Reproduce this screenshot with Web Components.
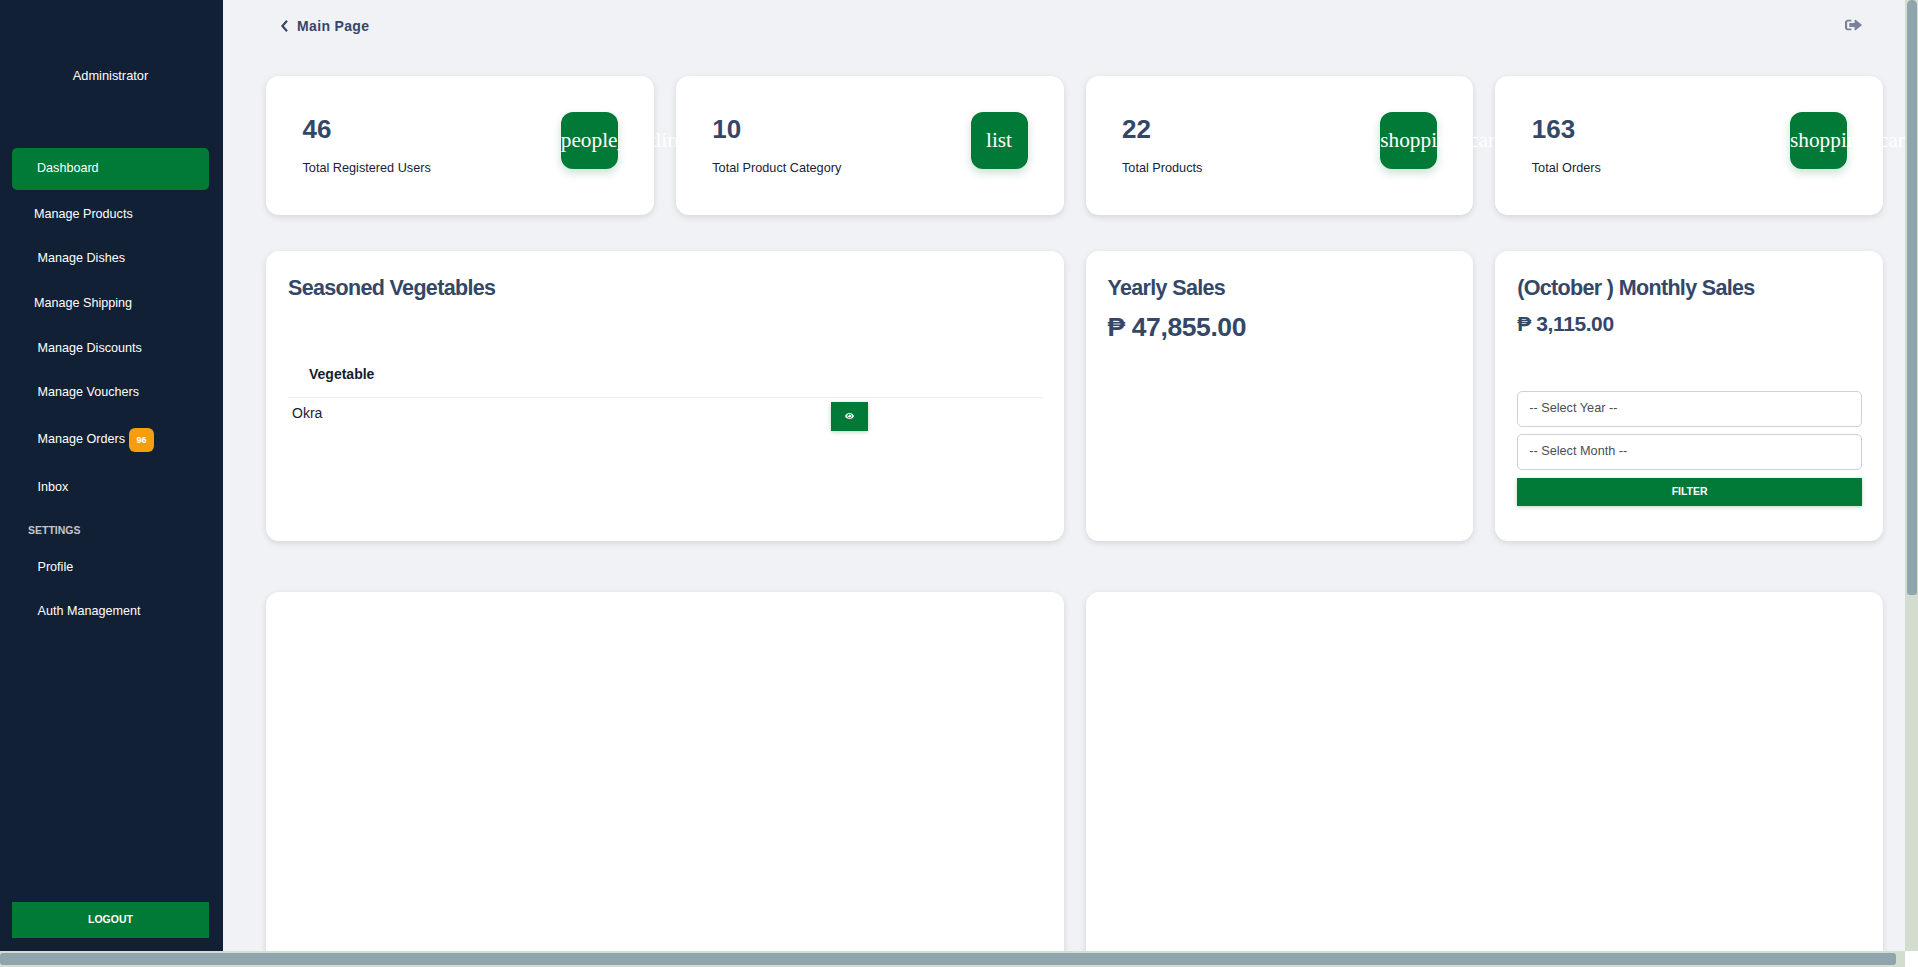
<!DOCTYPE html>
<html lang="en">
<head>
<meta charset="utf-8">
<title>Dashboard</title>
<style>
html,body{margin:0;padding:0;height:100%;overflow:hidden;background:#fff;font-family:"Liberation Sans",Arial,sans-serif}
</style>
</head>
<body>
<app-shell>
  <side-bar slot="side">
    <nav-item active indent="25">Dashboard</nav-item>
    <nav-item indent="22">Manage Products</nav-item>
    <nav-item indent="25.500">Manage Dishes</nav-item>
    <nav-item indent="22">Manage Shipping</nav-item>
    <nav-item indent="25.500">Manage Discounts</nav-item>
    <nav-item indent="25.500">Manage Vouchers</nav-item>
    <nav-item indent="25.500" badge="96" tall>Manage Orders</nav-item>
    <nav-item indent="25.500">Inbox</nav-item>
    <nav-heading>SETTINGS</nav-heading>
    <nav-item indent="25.500">Profile</nav-item>
    <nav-item indent="25.500">Auth Management</nav-item>
  </side-bar>
  <main-view slot="main">
    <top-bar slot="top"></top-bar>
    <stat-card slot="stats" value="46" label="Total Registered Users" icon="people_outline"></stat-card>
    <stat-card slot="stats" value="10" label="Total Product Category" icon="list"></stat-card>
    <stat-card slot="stats" value="22" label="Total Products" icon="shopping_cart"></stat-card>
    <stat-card slot="stats" value="163" label="Total Orders" icon="shopping_cart"></stat-card>
    <panel-card slot="panels" class="wide" heading="Seasoned Vegetables"><veg-table></veg-table></panel-card>
    <panel-card slot="panels" heading="Yearly Sales" amount="₱ 47,855.00" big></panel-card>
    <panel-card slot="panels" heading="(October ) Monthly Sales" amount="₱ 3,115.00"><sales-filter></sales-filter></panel-card>
    <panel-card slot="charts" class="half"></panel-card>
    <panel-card slot="charts" class="half"></panel-card>
  </main-view>
</app-shell>
<script>
const GREEN='#017a38';
function esc(s){return String(s==null?'':s).replace(/&/g,'&amp;').replace(/</g,'&lt;')}
class Base extends HTMLElement{
  connectedCallback(){ if(!this.shadowRoot){ this.attachShadow({mode:'open'}).innerHTML=this.render(); } }
}
customElements.define('app-shell',class extends Base{render(){return `<style>
:host{display:grid;grid-template-columns:1905px 13px;grid-template-rows:951px 16px;width:1918px;height:967px;overflow:hidden}
.body{display:flex;overflow:hidden;min-width:0;min-height:0;background:#f0f2f6}
.v{background:#d2ddd0;padding-left:2px;padding-right:1px}
.v i{display:block;height:595px;background:#90a4ae;border-radius:0 0 3px 3px;border-top-left-radius:5px;border-top-right-radius:5px}
.h{background:#d2ddd0;padding:2px 0}
.h i{display:block;height:12px;width:1896px;background:#90a4ae;border-radius:3px}
.c{background:#fff}
</style>
<div class="body"><slot name="side"></slot><slot name="main"></slot></div>
<div class="v"><i></i></div><div class="h"><i></i></div><div class="c"></div>`}});

customElements.define('side-bar',class extends Base{render(){return `<style>
:host{display:flex;flex-direction:column;flex:0 0 223px;width:223px;height:951px;box-sizing:border-box;background:#112035;color:#fff;padding:0 14px 13px 12px}
.who{height:148px;box-sizing:border-box;padding-top:68px;text-align:center;line-height:16px;font-size:12.8px}
nav{display:flex;flex-direction:column}
button{margin-top:auto;height:36px;border:0;background:${GREEN};color:#fff;font:bold 10.5px "Liberation Sans",Arial,sans-serif;padding:0 0 2px;display:block;width:197px}
</style>
<div class="who">Administrator</div>
<nav><slot></slot></nav>
<button type="button">LOGOUT</button>`}});

customElements.define('nav-item',class extends Base{render(){
  const act=this.hasAttribute('active'), tall=this.hasAttribute('tall'), b=this.getAttribute('badge');
  return `<style>
:host{display:block;width:197px;margin-bottom:2.7px}
a{display:flex;align-items:center;height:${tall?'47':'42'}px;box-sizing:border-box;padding-left:${parseFloat(this.getAttribute('indent')||26)}px;color:#fff;font-size:12.6px;border-radius:5px;background:${act?GREEN:'transparent'}}
span{padding-bottom:${act||tall?'2px':'0'}}
b{display:inline-flex;align-items:center;justify-content:center;width:25px;height:24px;margin:1px 0 0 4px;background:#f59e0b;border-radius:6px;font-size:9px;font-weight:bold;color:#fff}
</style><a><span><slot></slot></span>${b?`<b>${esc(b)}</b>`:''}</a>`}});

customElements.define('nav-heading',class extends Base{render(){return `<style>
:host{display:block;font-size:10.5px;font-weight:bold;color:#c3c7ce;line-height:14px;padding:12px 0 9px 16px}
</style><slot></slot>`}});

customElements.define('main-view',class extends Base{render(){return `<style>
:host{display:block;flex:1 1 auto;min-width:0;height:951px;overflow:hidden;box-sizing:border-box;padding:0 22px 0 43px;color:#1a2238}
.row{display:grid;grid-template-columns:repeat(4,minmax(0,1fr));column-gap:22px}
.stats{height:139px;margin-bottom:36px}
.panels{height:290px;margin-bottom:51px}
.charts{height:420px}
</style>
<slot name="top"></slot>
<div class="row stats"><slot name="stats"></slot></div>
<div class="row panels"><slot name="panels"></slot></div>
<div class="row charts"><slot name="charts"></slot></div>`}});

customElements.define('top-bar',class extends Base{render(){return `<style>
:host{display:flex;justify-content:space-between;height:76px;box-sizing:border-box;padding:17px 21px 0 15px;align-items:flex-start}
.back{display:flex;align-items:center;gap:9px;font-size:14px;font-weight:bold;letter-spacing:.35px;color:#344767;line-height:18px}
.out{margin-top:1px}
svg{display:block}
</style>
<div class="back"><svg width="7" height="12" viewBox="0 0 7 12"><path d="M6 .8L1.4 6 6 11.200" fill="none" stroke="#344767" stroke-width="2.200"/></svg><span>Main Page</span></div>
<svg class="out" width="17" height="14" viewBox="0 0 512 512" preserveAspectRatio="none" fill="#7b809a"><path d="M497 273L329 441c-15 15-41 4.5-41-17v-96H152c-13.3 0-24-10.7-24-24v-96c0-13.3 10.7-24 24-24h136V88c0-21.400 25.900-32 41-17l168 168c9.300 9.400 9.300 24.600 0 34zM192 436v-40c0-6.600-5.400-12-12-12H96c-17.700 0-32-14.300-32-32V160c0-17.700 14.300-32 32-32h84c6.600 0 12-5.400 12-12V76c0-6.600-5.400-12-12-12H96c-53 0-96 43-96 96v192c0 53 43 96 96 96h84c6.600 0 12-5.400 12-12z"/></svg>`}});

customElements.define('stat-card',class extends Base{render(){return `<style>
:host{display:flex;justify-content:space-between;box-sizing:border-box;height:139px;background:#fff;border-radius:13px;box-shadow:0 2px 6px rgba(0,0,0,.12);padding:36px 36px 0 36.500px}
.v{font-size:26px;font-weight:bold;color:#344767;line-height:30px;margin-top:2px}
.l{font-size:12.7px;color:#1a2238;line-height:16px;margin-top:16px}
.i{flex:0 0 57px;width:57px;height:57px;box-sizing:border-box;background:${GREEN};border-radius:12px;box-shadow:0 4px 10px rgba(1,122,56,.22);color:#fff;font:21.3px/57px "Liberation Serif","Times New Roman",serif;white-space:nowrap;text-align:center}
</style>
<div><div class="v">${esc(this.getAttribute('value'))}</div><div class="l">${esc(this.getAttribute('label'))}</div></div>
<div class="i">${esc(this.getAttribute('icon'))}</div>`}});

customElements.define('panel-card',class extends Base{render(){
  const h=this.getAttribute('heading'), a=this.getAttribute('amount'), big=this.hasAttribute('big');
  const cls=this.className;
  return `<style>
:host{display:block;box-sizing:border-box;background:#fff;border-radius:13px;box-shadow:0 2px 6px rgba(0,0,0,.12);padding:23px 21px 0 22px;min-width:0;${(cls==='wide'||cls==='half')?'grid-column:span 2;':''}}
h2{margin:0;font-size:21.5px;font-weight:bold;letter-spacing:-.66px;line-height:28px;color:#344767}
p{margin:${big?'10px':'9px'} 0 0;font-size:${big?'26.5px':'21px'};font-weight:bold;letter-spacing:-.4px;line-height:${big?'30px':'26px'};color:#344767}
</style>${h?`<h2>${esc(h)}</h2>`:''}${a?`<p>${esc(a)}</p>`:''}<slot></slot>`}});

customElements.define('veg-table',class extends Base{render(){return `<style>
:host{display:block;margin-top:49px}
table{border-collapse:collapse;width:100%;table-layout:fixed;font-size:14px;color:#1a2238}
th{height:46px;box-sizing:border-box;padding:0 0 0 21px;text-align:left;font-weight:bold;font-size:14px;border-bottom:1px solid #eee;color:#151c30}
td{vertical-align:top;padding:7px 0 0 4px;line-height:16px}
td.b{padding:4px 0 0}
button{display:flex;align-items:center;justify-content:center;width:37px;height:29px;padding:0;border:0;background:${GREEN};box-shadow:0 1px 4px rgba(1,122,56,.3)}
</style>
<table><colgroup><col style="width:543px"><col></colgroup>
<thead><tr><th>Vegetable</th><th></th></tr></thead>
<tbody><tr><td>Okra</td><td class="b"><button type="button" aria-label="View"><svg width="9" height="8" viewBox="0 0 576 512" fill="#fff"><path d="M572.52 241.4C518.29 135.59 410.93 64 288 64S57.68 135.64 3.48 241.41a32.35 32.35 0 0 0 0 29.19C57.71 376.41 165.07 448 288 448s230.32-71.64 284.52-177.41a32.35 32.35 0 0 0 0-29.19zM288 400a144 144 0 1 1 144-144 143.93 143.93 0 0 1-144 144zm0-240a95.31 95.31 0 0 0-25.31 3.79 47.85 47.85 0 0 1-66.9 66.9A95.78 95.78 0 1 0 288 160z"/></svg></button></td></tr></tbody></table>`}});

customElements.define('sales-filter',class extends Base{render(){return `<style>
:host{display:flex;flex-direction:column;margin-top:54px}
.s{height:36px;box-sizing:border-box;border:1px solid #ced0d8;border-radius:5px;background:#fff;padding:0 11px;font-size:12.7px;line-height:33px;color:#495057;margin-bottom:7px}
.s + .s{margin-bottom:8px}
button{height:28px;border:0;background:${GREEN};color:#fff;font:bold 10.5px "Liberation Sans",Arial,sans-serif;padding:0 0 2px;box-shadow:0 1px 4px rgba(1,122,56,.3)}
</style>
<div class="s">-- Select Year --</div>
<div class="s">-- Select Month --</div>
<button type="button">FILTER</button>`}});
</script>
</body>
</html>
